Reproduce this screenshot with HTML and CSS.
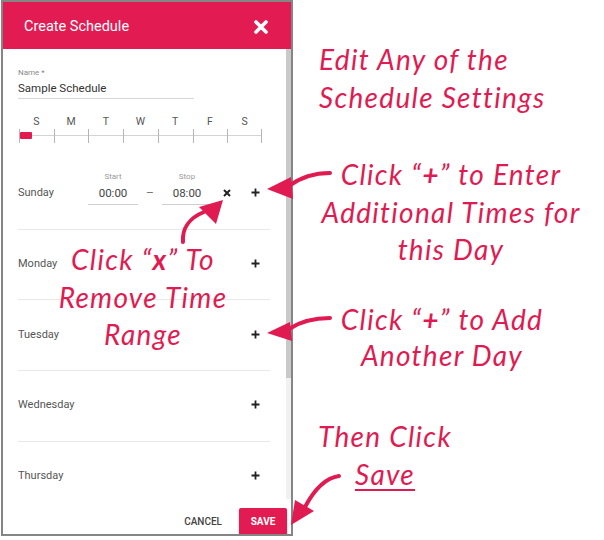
FILE: index.html
```html
<!DOCTYPE html>
<html>
<head>
<meta charset="utf-8">
<link rel="stylesheet" href="styles.css">
</head>
<body>
<div class="page">
  <div class="dialog">
    <div class="header">
      <span class="title">Create Schedule</span>
      <svg class="close" width="14" height="14" viewBox="0 0 14 14"><path d="M2 2 L12 12 M12 2 L2 12" stroke="#fff" stroke-width="3.6" stroke-linecap="round"/></svg>
    </div>
    <div class="body">
      <div class="content">
        <div class="field">
          <div class="field-label">Name *</div>
          <div class="field-value">Sample Schedule</div>
        </div>
        <div class="days">
          <div class="day-letters"><span>S</span><span>M</span><span>T</span><span>W</span><span>T</span><span>F</span><span>S</span></div>
          <div class="slider">
            <span class="seg"></span><span class="seg"></span><span class="seg"></span><span class="seg"></span><span class="seg"></span><span class="seg"></span><span class="seg last"></span>
            <span class="slider-thumb"></span>
          </div>
        </div>
        <div class="day-row">
          <span class="day-name">Sunday</span>
          <div class="time">
            <span class="time-label">Start</span>
            <span class="time-value">00:00</span>
          </div>
          <span class="dash">–</span>
          <div class="time">
            <span class="time-label">Stop</span>
            <span class="time-value">08:00</span>
          </div>
          <svg class="remove" width="8" height="8" viewBox="0 0 8 8"><path d="M1 1 L7 7 M7 1 L1 7" stroke="#222" stroke-width="2"/></svg>
          <svg class="plus" width="9" height="9" viewBox="0 0 9 9"><path d="M4.5 0.5 V8.5 M0.5 4.5 H8.5" stroke="#222" stroke-width="1.8"/></svg>
        </div>
        <div class="day-row">
          <span class="day-name">Monday</span>
          <svg class="plus" width="9" height="9" viewBox="0 0 9 9"><path d="M4.5 0.5 V8.5 M0.5 4.5 H8.5" stroke="#222" stroke-width="1.8"/></svg>
        </div>
        <div class="day-row">
          <span class="day-name">Tuesday</span>
          <svg class="plus" width="9" height="9" viewBox="0 0 9 9"><path d="M4.5 0.5 V8.5 M0.5 4.5 H8.5" stroke="#222" stroke-width="1.8"/></svg>
        </div>
        <div class="day-row">
          <span class="day-name">Wednesday</span>
          <svg class="plus" width="9" height="9" viewBox="0 0 9 9"><path d="M4.5 0.5 V8.5 M0.5 4.5 H8.5" stroke="#222" stroke-width="1.8"/></svg>
        </div>
        <div class="day-row">
          <span class="day-name">Thursday</span>
          <svg class="plus" width="9" height="9" viewBox="0 0 9 9"><path d="M4.5 0.5 V8.5 M0.5 4.5 H8.5" stroke="#222" stroke-width="1.8"/></svg>
        </div>
      </div>
      <div class="scrollbar"><div class="scroll-thumb"></div></div>
    </div>
    <div class="footer">
      <span class="cancel">CANCEL</span>
      <span class="save">SAVE</span>
    </div>
  </div>

  <div class="note note-edit">Edit Any of the<br>Schedule Settings</div>
  <div class="note note-enter">Click “<b>+</b>” to Enter<br>Additional Times for<br>this Day</div>
  <div class="note note-remove">Click “<b>x</b>” To<br>Remove Time<br>Range</div>
  <div class="note note-add">Click “<b>+</b>” to Add<br>Another Day</div>
  <div class="note note-save">Then Click<br><u>Save</u></div>

  <svg class="arrows" width="604" height="540" viewBox="0 0 604 540">
    <g fill="none" stroke="#e01b52" stroke-width="4" stroke-linecap="round">
      <path d="M330 173 C313 173 301 177 289 186"/>
      <path d="M183 242 C182 229 189 218 204 212"/>
      <path d="M330 318 C313 318 301 321 289 329"/>
      <path d="M339 476 C325 478 314 490 305 507"/>
    </g>
    <g fill="#e01b52">
      <polygon points="267,189 291,177 293,199"/>
      <polygon points="223,200 199,207 216,224"/>
      <polygon points="267,333 290,322 292,341"/>
      <polygon points="291,525 295,500 314,511"/>
    </g>
  </svg>
</div>
</body>
</html>
```
FILE: styles.css
```css
* { box-sizing: border-box; }
html, body { margin: 0; padding: 0; background: #fff; }
body { width: 604px; height: 540px; overflow: hidden; font-family: Roboto, "Liberation Sans", sans-serif; }

.page { position: relative; width: 604px; height: 540px; }

.dialog {
  margin-left: 1px;
  width: 292px;
  height: 536px;
  border: 2px solid #858585;
  display: flex;
  flex-direction: column;
  background: #fff;
  overflow: hidden;
}

.header {
  height: 47px;
  flex: none;
  background: #e21c52;
  display: flex;
  align-items: center;
  justify-content: space-between;
  padding: 2px 23px 0 21px;
}
.title { color: #fff; font-size: 14.5px; }
.close { display: block; }

.body { flex: 1; display: flex; min-height: 0; }
.content {
  flex: 1;
  padding: 19px 16px 0 15px;
  overflow: hidden;
}
.scrollbar { width: 5px; background: #f1f1f1; display: flex; flex-direction: column; }
.scroll-thumb { height: 329px; background: #c9c9c9; }

.field { width: 176px; }
.field-label { font-size: 8px; line-height: 10px; color: #8a8a8a; }
.field-value {
  margin-top: 2px;
  font-size: 11.5px;
  line-height: 16px;
  color: #333;
  padding-bottom: 2px;
  border-bottom: 1px solid #d6d6d6;
}

.days { width: 243px; margin-top: 17px; margin-left: 1px; }
.day-letters { display: grid; grid-template-columns: repeat(7, 1fr); font-size: 10.5px; line-height: 12px; color: #555; text-align: center; }
.slider { position: relative; margin-top: 1px; height: 14px; display: grid; grid-template-columns: repeat(7, 1fr); }
.seg { border-left: 1px solid #b5b5b5; position: relative; }
.seg::after { content: ""; position: absolute; left: 0; right: 0; top: 6px; height: 1px; background: #d4d4d4; }
.seg.last { border-right: 1px solid #b5b5b5; }
.slider-thumb { position: absolute; left: 1px; top: 3px; width: 12px; height: 7px; background: #e21c52; border-radius: 1px; }

.day-row {
  margin-top: 16px;
  height: 70.7px;
  display: flex;
  align-items: center;
  padding-bottom: 2px;
  border-bottom: 1px solid #e8e8e8;
  font-size: 11px;
  color: #555;
}
.day-row + .day-row { margin-top: 0; }
.day-name { width: 70px; }
.time { width: 50px; display: flex; flex-direction: column; align-items: center; margin-top: -9px; border-bottom: 1px solid #cfcfcf; }
.time-label { font-size: 8px; line-height: 10px; color: #9a9a9a; }
.time-value { margin-top: 4px; font-size: 11.5px; line-height: 14px; color: #444; padding-bottom: 4px; }
.dash { width: 24px; text-align: center; color: #777; font-size: 12px; }
.remove { margin-left: 11px; display: block; }
.plus { margin-left: auto; margin-right: 10px; display: block; }

.footer {
  height: 35px;
  flex: none;
  display: flex;
  justify-content: flex-end;
  align-items: flex-start;
  padding: 9px 4px 0 0;
}
.cancel { font-size: 10px; font-weight: 500; color: #444; line-height: 27px; margin-right: 17px; }
.save {
  width: 48px; height: 27px;
  background: #e21c52; color: #fff;
  font-size: 10px; font-weight: 700;
  display: flex; align-items: center; justify-content: center;
  border-radius: 2px;
  box-shadow: 0 1px 2px rgba(0,0,0,0.3);
}

.note {
  position: absolute;
  font-family: Lato, "Open Sans", sans-serif;
  font-style: italic;
  font-size: 28px;
  letter-spacing: 1.3px;
  line-height: 37.5px;
  color: #e01b52;
  white-space: nowrap;
}
.note b { font-weight: 700; }
.note-edit { left: 319px; top: 41px; }
.note-enter { left: 300px; width: 302px; top: 156px; text-align: center; }
.note-remove { left: 43px; width: 200px; top: 241px; text-align: center; }
.note-add { left: 322px; width: 240px; top: 301px; text-align: center; line-height: 36px; }
.note-save { left: 305px; width: 160px; top: 418px; text-align: center; }
.note u { text-decoration-thickness: 2px; text-underline-offset: 4px; }

.arrows { position: absolute; left: 0; top: 0; pointer-events: none; }
```
